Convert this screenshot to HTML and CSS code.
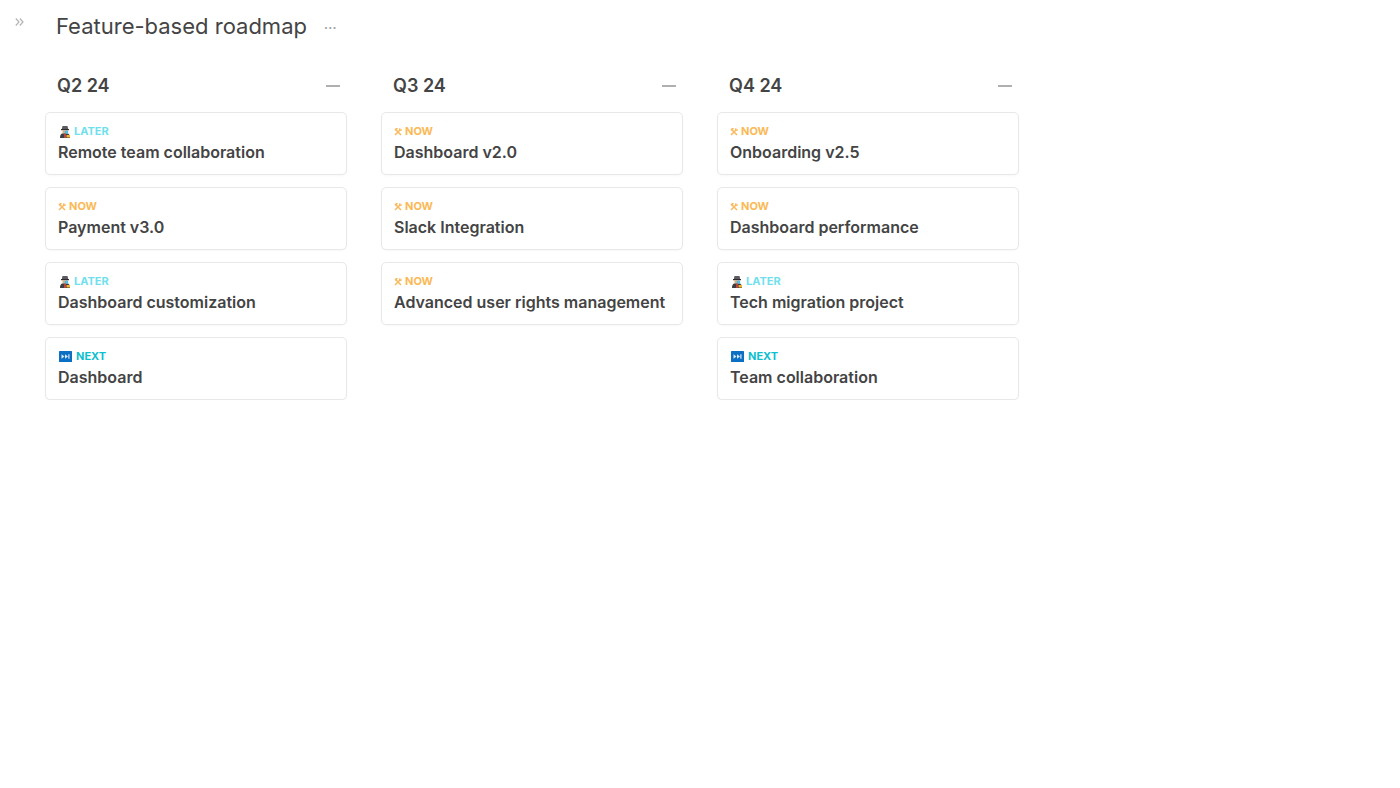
FILE: index.html
```html
<!DOCTYPE html>
<html lang="en">
<head>
    <meta charset="UTF-8">
    <meta name="viewport" content="width=device-width, initial-scale=1.0">
    <title>Feature-based roadmap</title>
    <link rel="stylesheet" href="styles.css">
</head>
<body>
    <!-- Shared tag icons -->
    <svg class="icon-defs" width="0" height="0" aria-hidden="true">
        <symbol id="icon-later" viewBox="0 0 12 12">
            <path d="M3.500 0h5l.8 3.500H2.700z" fill="#5d5a62"/>
            <path d="M2 3h8v1.200H2z" fill="#2e2c30"/>
            <path d="M3.500 4.200h5v3.300h-5z" fill="#e0aa74"/>
            <path d="M1 12c0-3 1-4.500 2.500-4.500h5C10 7.500 11 9 11 12z" fill="#3f3d44"/>
            <path d="M5 7.500h2V12H5z" fill="#b5473c"/>
            <circle cx="7.500" cy="6" r="1.800" fill="#4bbdec"/>
            <path d="M7.500 9h3.500v2.500H7.500z" fill="#f2b233"/>
        </symbol>
        <symbol id="icon-now" viewBox="0 0 8 8">
            <path d="M1.800 1.800 7 7M6.200 1.800 1 7" fill="none" stroke="#f9b95c" stroke-width="1.500"/>
            <path d="M.5 1.500 2 0h2L3.200 1.400 1.800 3zM5 .5 6.500 0 6.200 1.500 7.500 1.300 8 1 7.600 2.800 5.800 3 5 2z" fill="#f9b95c"/>
        </symbol>
        <symbol id="icon-next" viewBox="0 0 13 11" preserveAspectRatio="none">
            <rect width="13" height="11" rx="0.500" fill="#0b6fc4"/>
            <path d="M2.500 3.200 5.500 5.500 2.500 7.800zM6 3.200 9 5.500 6 7.800zM9.300 3.200h1.200v4.600H9.300z" fill="#dbe9f5"/>
        </symbol>
    </svg>

    <div class="page">
        <!-- Title row -->
        <header class="page-header">
            <svg class="collapse-icon" width="9" height="8" viewBox="0 0 9 8">
                <path d="M.8.500 4 4 .8 7.500M4.800.500 8 4 4.800 7.500"/>
            </svg>
            <h1>Feature-based roadmap</h1>
            <span class="more">&middot;&middot;&middot;</span>
        </header>

        <!-- Roadmap columns -->
        <main class="board">
            <section class="column">
                <div class="column-head"><h2>Q2 24</h2><span class="minus"></span></div>
                <article class="card">
                    <div class="tag later"><svg class="tag-icon"><use href="#icon-later"/></svg>LATER</div>
                    <div class="card-title">Remote team collaboration</div>
                </article>
                <article class="card">
                    <div class="tag now"><svg class="tag-icon small"><use href="#icon-now"/></svg>NOW</div>
                    <div class="card-title">Payment v3.0</div>
                </article>
                <article class="card">
                    <div class="tag later"><svg class="tag-icon"><use href="#icon-later"/></svg>LATER</div>
                    <div class="card-title">Dashboard customization</div>
                </article>
                <article class="card">
                    <div class="tag next"><svg class="tag-icon wide"><use href="#icon-next"/></svg>NEXT</div>
                    <div class="card-title">Dashboard</div>
                </article>
            </section>

            <section class="column">
                <div class="column-head"><h2>Q3 24</h2><span class="minus"></span></div>
                <article class="card">
                    <div class="tag now"><svg class="tag-icon small"><use href="#icon-now"/></svg>NOW</div>
                    <div class="card-title">Dashboard v2.0</div>
                </article>
                <article class="card">
                    <div class="tag now"><svg class="tag-icon small"><use href="#icon-now"/></svg>NOW</div>
                    <div class="card-title">Slack Integration</div>
                </article>
                <article class="card">
                    <div class="tag now"><svg class="tag-icon small"><use href="#icon-now"/></svg>NOW</div>
                    <div class="card-title">Advanced user rights management</div>
                </article>
            </section>

            <section class="column">
                <div class="column-head"><h2>Q4 24</h2><span class="minus"></span></div>
                <article class="card">
                    <div class="tag now"><svg class="tag-icon small"><use href="#icon-now"/></svg>NOW</div>
                    <div class="card-title">Onboarding v2.5</div>
                </article>
                <article class="card">
                    <div class="tag now"><svg class="tag-icon small"><use href="#icon-now"/></svg>NOW</div>
                    <div class="card-title">Dashboard performance</div>
                </article>
                <article class="card">
                    <div class="tag later"><svg class="tag-icon"><use href="#icon-later"/></svg>LATER</div>
                    <div class="card-title">Tech migration project</div>
                </article>
                <article class="card">
                    <div class="tag next"><svg class="tag-icon wide"><use href="#icon-next"/></svg>NEXT</div>
                    <div class="card-title">Team collaboration</div>
                </article>
            </section>
        </main>
    </div>
</body>
</html>
```

FILE: styles.css
```css
/* General Styles */
body {
    margin: 0;
    font-family: Inter, "Noto Sans", sans-serif;
    background-color: #ffffff;
    color: #444444;
}

.icon-defs {
    display: block;
}

.page {
    padding: 12px 0 0 15px;
}

/* Title row */
.page-header {
    display: flex;
    align-items: center;
    height: 28px;
}

.collapse-icon {
    align-self: flex-start;
    margin-top: 6px;
    fill: none;
    stroke: #b4b4b4;
    stroke-width: 1.2;
}

.page-header h1 {
    margin: 0 0 0 32px;
    font-size: 22px;
    font-weight: 400;
    line-height: 28px;
}

.more {
    margin: 2px 0 0 17px;
    font-size: 12px;
    font-weight: 700;
    letter-spacing: 0.3px;
    color: #a3a3a3;
}

/* Board */
.board {
    display: flex;
    gap: 34px;
    margin: 30px 0 0 30px;
}

.column {
    display: flex;
    flex-direction: column;
    gap: 12px;
    width: 302px;
}

.column-head {
    display: flex;
    align-items: center;
    justify-content: space-between;
    box-sizing: border-box;
    height: 30px;
    padding: 1px 7px 0 12px;
}

.column-head h2 {
    margin: 0;
    font-size: 18px;
    font-weight: 600;
    line-height: 29px;
}

.minus {
    width: 14px;
    height: 2px;
    background-color: #b0b0b0;
}

/* Cards */
.card {
    box-sizing: border-box;
    height: 63px;
    padding: 12px 12px 0;
    background: #ffffff;
    border: 1px solid #e8e8e8;
    border-radius: 5px;
    box-shadow: 0 1px 2px rgba(0, 0, 0, 0.03);
}

.tag {
    display: flex;
    align-items: center;
    gap: 3px;
    height: 13px;
    font-size: 11px;
    font-weight: 700;
    line-height: 13px;
}

.tag-icon {
    width: 12px;
    height: 12px;
}

.tag-icon.small {
    width: 8px;
    height: 8px;
}

.tag-icon.wide {
    width: 13px;
    height: 11px;
}

.tag.later {
    color: #6fdfee;
}

.tag.later .tag-icon,
.tag.next .tag-icon {
    margin-left: 1px;
}

.tag.now {
    color: #fbb955;
}

.tag.next {
    gap: 4px;
    color: #0cc0cf;
}

.card-title {
    margin-top: 3px;
    font-size: 16px;
    font-weight: 600;
    line-height: 22px;
}
```
